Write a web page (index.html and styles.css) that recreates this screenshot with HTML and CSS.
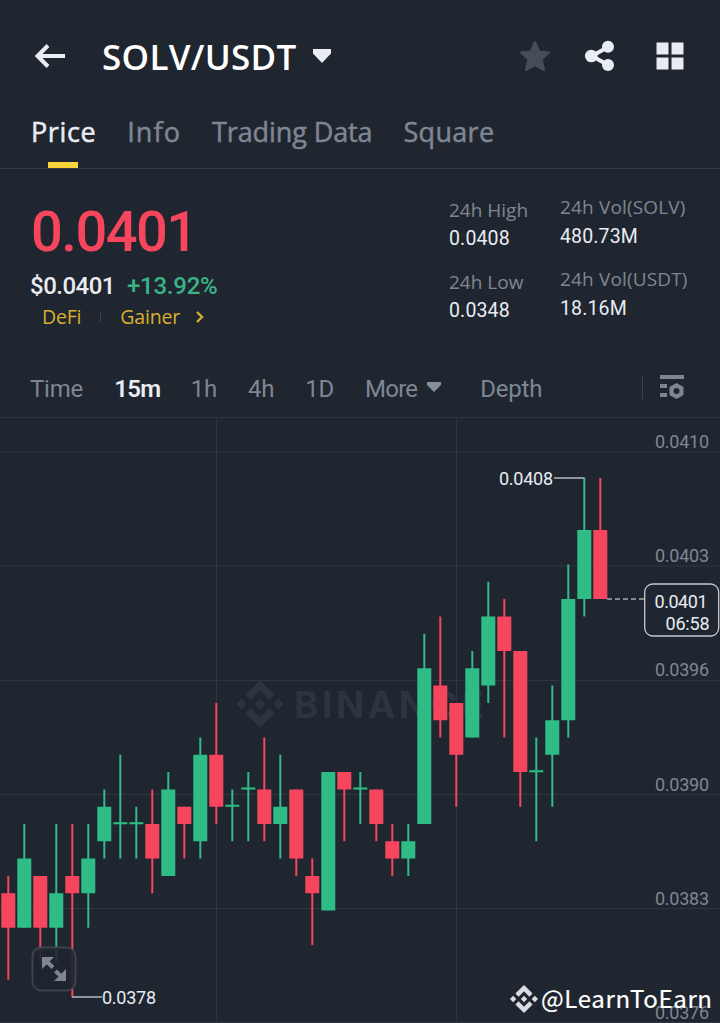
FILE: index.html
```
<!DOCTYPE html>
<html lang="en">
<head>
  <meta charset="UTF-8">
  <meta name="viewport" content="width=device-width, initial-scale=1.0">
  <title>SOLV/USDT</title>
  <link rel="stylesheet" href="styles.css">
</head>
<body>
  <header class="header">
    <svg class="back" width="32" height="26" viewBox="0 0 32 26" fill="none" stroke="#eaecf4" stroke-width="4">
      <path d="M31 13H4M14 2.500L3.500 13L14 23.500"></path>
    </svg>
    <h1 class="pair">SOLV/USDT</h1>
    <svg class="pair-caret" width="18" height="14" viewBox="0 0 18 14" fill="#eaecf4">
      <path d="M0 0H18V4.500L9 14L0 4.500Z"></path>
    </svg>
    <div class="actions">
      <svg width="32" height="32" viewBox="0 0 32 32" fill="#474d57" stroke="#474d57" stroke-width="2" stroke-linejoin="round">
        <path d="M16 2L20.200 11.500L30 12.500L22.700 19.300L25 30L16 25.200L7 30L9.300 19.300L2 12.500L11.800 11.500Z"></path>
      </svg>
      <svg width="30" height="32" viewBox="0 0 30 32" fill="#eaecf4">
        <path d="M23 7L7 16L23 25" fill="none" stroke="#eaecf4" stroke-width="4"></path>
        <circle cx="23" cy="6.800" r="6"></circle>
        <circle cx="6.300" cy="16" r="6.300"></circle>
        <circle cx="23" cy="25" r="6"></circle>
      </svg>
      <svg width="28" height="28" viewBox="0 0 28 28" fill="#eaecf4">
        <path d="M.5.5H12.500V12.500H.5ZM15.500.5H27.500V12.500H15.500ZM.5 15.500H12.500V27.500H.5ZM15.500 15.500H27.500V27.500H15.500Z"></path>
      </svg>
    </div>
  </header>

  <nav class="tabs">
    <a class="tab tab-price active">Price</a>
    <a class="tab tab-info">Info</a>
    <a class="tab tab-data">Trading Data</a>
    <a class="tab tab-square">Square</a>
  </nav>

  <section class="summary">
    <div class="quote">
      <div class="price">0.0401</div>
      <div class="change-row">
        <span class="usd">$0.0401</span>
        <span class="change">+13.92%</span>
      </div>
      <div class="tags">
        <span class="tag-defi">DeFi</span>
        <span class="tag-divider"></span>
        <span class="tag-gainer">Gainer</span>
        <svg width="8" height="12" viewBox="0 0 8 12" fill="none" stroke="#d9ae2e" stroke-width="2.400">
          <path d="M1 1L6 6L1 11"></path>
        </svg>
      </div>
    </div>
    <dl class="stats">
      <dt>24h High</dt>
      <dd>0.0408</dd>
      <dt>24h Low</dt>
      <dd>0.0348</dd>
    </dl>
    <dl class="stats stats-volume">
      <dt>24h Vol(SOLV)</dt>
      <dd>480.73M</dd>
      <dt>24h Vol(USDT)</dt>
      <dd>18.16M</dd>
    </dl>
  </section>

  <nav class="intervals">
    <span class="interval">Time</span>
    <span class="interval selected">15m</span>
    <span class="interval">1h</span>
    <span class="interval">4h</span>
    <span class="interval">1D</span>
    <span class="interval more">More
      <svg width="14" height="10" viewBox="0 0 14 10" fill="#848e9c"><path d="M0 0H14V3L7 10L0 3Z"></path></svg>
    </span>
    <span class="interval depth">Depth</span>
    <span class="settings">
      <svg width="24" height="24" viewBox="0 0 24 24" fill="#7f8693">
        <path d="M0 0H24V4H0ZM0 9H7V13H0ZM0 18H7V22H0Z"></path>
        <path fill-rule="evenodd" d="M16.500 8L23.500 12V20L16.500 24L9.500 20V12ZM16.500 13A3 3 0 1 0 16.500 19A3 3 0 1 0 16.500 13Z"></path>
      </svg>
    </span>
  </nav>

  <svg class="chart" width="720" height="605" viewBox="0 418 720 605">
    <defs>
      <symbol id="logo" viewBox="0 0 24 24">
        <path d="M16.624 13.920l2.718 2.716-7.354 7.353-7.353-7.352 2.718-2.717 4.635 4.660 4.636-4.660zM21.261 9.284L24 12l-2.715 2.716L18.568 12zM11.989 9.285l2.716 2.691-2.716 2.717L9.272 12zM2.716 9.284L5.409 12l-2.692 2.692L0 12zM11.989.012l7.353 7.329-2.718 2.715-4.635-4.636-4.636 4.660-2.717-2.715z"></path>
      </symbol>
    </defs>

    <path class="grid" d="M0 452H720M0 566H720M0 680.500H720M0 794.500H720M0 908.500H720M0 1022.500H720M216.500 418V1023M456.500 418V1023"></path>

    <g class="watermark">
      <use href="#logo" x="236" y="680" width="48" height="48"></use>
      <text x="294" y="718" textLength="190">BINANCE</text>
    </g>

    <!-- one unit is one candle across and one 0.0001 tick down from 0.0408 -->
    <g class="candles" transform="translate(8.300 478) scale(16 17.300)">
      <path class="wick up" d="M1 20V26M3 20V28M5 20V26M6 18V22M7 16V22M8 19V22M10 17V23M12 15V22M14 18V21M15 17V21M17 16V22M22 17V20M25 20V23M26 9V20M29 10V15M30 6V13M33 15V21M34 12V19M35 5V15M36 0V8"></path>
      <path class="wick down" d="M0 23V29M2 23V28M4 20V30M9 18V24M11 19V22M13 13V20M16 15V21M18 18V23M19 22V27M21 17V21M23 18V21M24 20V23M27 8V15M28 13V19M31 7V15M32 10V19M37 0V7"></path>
      <path class="body up" d="M1 22V26M3 24V26M5 22V24M6 19V21M10 18V23M12 16V21M17 19V20M20 17V25M25 21V22M26 11V20M29 11V15M30 8V12M34 14V16M35 7V14M36 3V7"></path>
      <path class="body down" d="M0 24V26M2 23V26M4 23V24M9 20V22M11 19V20M13 16V19M16 18V20M18 18V22M19 23V24M21 17V18M23 18V20M24 21V22M27 12V14M28 13V16M31 8V10M32 10V17M37 3V7"></path>
      <path class="wick up" d="M6.560 19.950H7.440M7.560 19.950H8.440M13.560 18.950H14.440M14.560 17.950H15.440M21.560 17.950H22.440M32.560 16.950H33.440"></path>
    </g>

    <path class="leader" d="M554 478H584.500M72 997H102"></path>
    <g class="mark">
      <text x="499" y="485" textLength="54">0.0408</text>
      <text x="102" y="1004" textLength="54">0.0378</text>
    </g>

    <g class="axis">
      <text x="655" y="448" textLength="54">0.0410</text>
      <text x="655" y="562" textLength="54">0.0403</text>
      <text x="655" y="676" textLength="54">0.0396</text>
      <text x="655" y="791" textLength="54">0.0390</text>
      <text x="655" y="905" textLength="54">0.0383</text>
      <text x="655" y="1019" textLength="54">0.0376</text>
    </g>

    <path class="last-line" d="M607 599H644"></path>
    <rect class="last-box" x="644.700" y="584" width="74" height="52" rx="8"></rect>
    <g class="mark">
      <text x="654.500" y="608" textLength="53">0.0401</text>
      <text x="665.500" y="630" textLength="44">06:58</text>
    </g>

    <rect class="expand-box" x="32.500" y="947.500" width="43" height="43" rx="9"></rect>
    <g class="expand">
      <path d="M42 957H54L42 969ZM66 981H54L66 969Z"></path>
      <path class="expand-stem" d="M44 959L53 967.500M64 979L55.500 971"></path>
    </g>

    <g class="credit">
      <use href="#logo" x="510" y="985" width="28" height="28"></use>
      <text x="541" y="1008" textLength="171">@LearnToEarn</text>
    </g>
  </svg>
</body>
</html>
```
FILE: styles.css
```
* {
  box-sizing: border-box;
}
body {
  margin: 0;
  width: 720px;
  height: 1023px;
  overflow: hidden;
  background-color: #1f262f;
  color: #eaecf4;
  font-family: Roboto, sans-serif;
}
svg {
  display: block;
  flex-shrink: 0;
}

/* Header */
.header {
  display: flex;
  align-items: center;
  height: 112px;
  padding: 0 36px 0 34px;
}
.pair {
  margin: 2px 0 0 36px;
  width: 196px;
  font-family: "Open Sans", sans-serif;
  font-size: 35px;
  font-weight: 600;
  line-height: 44px;
  letter-spacing: 0.3px;
  color: #fff;
  white-space: nowrap;
}
.pair-caret {
  margin-left: 15px;
}
.actions {
  display: flex;
  align-items: center;
  margin-left: auto;
}
.actions svg + svg {
  margin-left: 34px;
}
.actions svg + svg + svg {
  margin-left: 41px;
}

/* Tabs */
.tabs {
  display: flex;
  gap: 31px;
  height: 57px;
  padding-left: 31px;
  border-bottom: 1px solid #343b46;
}
.tab {
  position: relative;
  font-family: "Open Sans", sans-serif;
  font-size: 27px;
  line-height: 40px;
  color: #7f8693;
  -webkit-text-stroke: 0.5px;
  white-space: nowrap;
}
.tab-price {
  letter-spacing: 0.6px;
}
.tab-info {
  letter-spacing: 1.1px;
}
.tab-data {
  letter-spacing: -0.1px;
}
.tab-square {
  letter-spacing: 0.3px;
}
.tab.active {
  color: #eaecf4;
}
.tab.active::after {
  content: "";
  position: absolute;
  left: 17px;
  bottom: 0;
  width: 30px;
  height: 6px;
  background-color: #f8d33a;
}

/* Price summary */
.summary {
  display: flex;
  height: 191px;
}
.quote {
  width: 449px;
  padding: 35px 0 0 31px;
}
.price {
  font-size: 56px;
  font-weight: 500;
  line-height: 56px;
  letter-spacing: -1.5px;
  color: #f6465d;
}
.change-row {
  display: flex;
  gap: 12px;
  margin-top: 12px;
  font-size: 24px;
  font-weight: 500;
  line-height: 28px;
}
.usd {
  margin-left: -1px;
  letter-spacing: -0.5px;
}
.change {
  letter-spacing: -0.25px;
  color: #39b384;
}
.tags {
  display: flex;
  align-items: center;
  margin-top: 5px;
  padding-left: 11px;
  font-family: "Open Sans", sans-serif;
  font-size: 19.5px;
  line-height: 24px;
  letter-spacing: -0.2px;
  color: #d9ae2e;
}
.tag-divider {
  width: 1px;
  height: 9px;
  margin: 0 19px;
  background-color: #3d444f;
}
.tags svg {
  margin-left: 16px;
}
.stats {
  width: 111px;
  margin: 27px 0 0;
  line-height: 28px;
  white-space: nowrap;
}
.stats dt {
  font-family: "Open Sans", sans-serif;
  font-size: 19px;
  color: #7f8693;
}
.stats dd {
  margin: 0 0 14px;
  font-size: 19.5px;
  line-height: 30px;
  letter-spacing: 0.15px;
}
.stats-volume {
  width: 160px;
  margin-top: 24px;
}
.stats-volume dt {
  letter-spacing: 0.15px;
}
.stats-volume dd {
  margin-bottom: 12px;
  line-height: 32px;
}

/* Interval bar */
.intervals {
  display: flex;
  align-items: center;
  height: 58px;
  padding: 0 36px 0 30px;
  border-bottom: 1px solid #2d343f;
  font-size: 24px;
  letter-spacing: -0.2px;
  color: #7f8693;
}
.interval {
  margin-right: 31px;
  white-space: nowrap;
}
.selected {
  margin-right: 30px;
  font-weight: 600;
  letter-spacing: -0.6px;
  color: #eaecf4;
}
.more {
  display: flex;
  align-items: center;
  gap: 10px;
  margin-right: 39px;
  letter-spacing: -0.8px;
}
.more svg {
  margin-bottom: 3px;
}
.depth {
  margin-right: 0;
}
.settings {
  margin: 0 0 3px auto;
  padding-left: 17px;
  border-left: 1px solid #3d444f;
}

/* Chart */
.grid {
  fill: none;
  stroke: #2f3640;
}
.watermark {
  fill: #2d343e;
}
.watermark text {
  font-family: Inter, sans-serif;
  font-size: 37px;
  font-weight: 700;
}
.candles path {
  fill: none;
  vector-effect: non-scaling-stroke;
}
.wick {
  stroke-width: 2px;
}
.body {
  stroke-width: 14px;
}
.up {
  stroke: #2ebd85;
}
.down {
  stroke: #f6465d;
}
.leader {
  stroke: #b4b9c3;
  stroke-width: 1.5px;
}
.mark,
.axis {
  font-size: 18px;
}
.mark {
  fill: #eaecf4;
}
.axis {
  fill: #7f8693;
}
.last-line {
  stroke: #a4aab5;
  stroke-width: 1.5px;
  stroke-dasharray: 5 3;
}
.last-box {
  fill: #1f262f;
  stroke: #c5c9d2;
  stroke-width: 1.3px;
}
.expand-box {
  fill: #1f262f;
  fill-opacity: 0.9;
  stroke: #3d434d;
  stroke-width: 2px;
}
.expand {
  fill: #7f8693;
}
.expand-stem {
  stroke: #7f8693;
  stroke-width: 4px;
}
.credit {
  fill: #d9dce4;
}
.credit text {
  fill: #fff;
  stroke: #fff;
  stroke-width: 0.2px;
  font-family: "Noto Sans CJK SC", sans-serif;
  font-size: 24px;
}
```
